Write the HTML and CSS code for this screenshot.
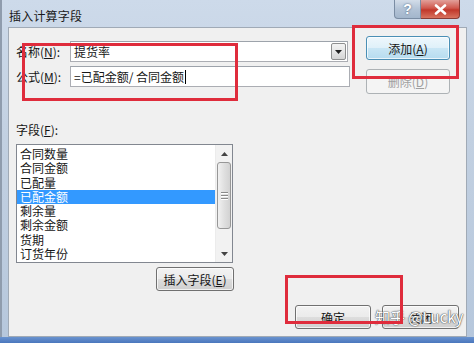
FILE: index.html
```html
<!DOCTYPE html>
<html lang="zh">
<head>
<meta charset="utf-8">
<title>插入计算字段</title>
<link rel="stylesheet" href="styles.css">
</head>
<body>
<div class="window">
  <div class="titlebar">
    <div class="title">插入计算字段</div>
    <div class="caption">
      <div class="cap help">?</div>
      <div class="cap close">
        <svg width="13" height="11" viewBox="0 0 13 11"><path d="M2 1.5 L11 9.5 M11 1.5 L2 9.5" stroke="#fff" stroke-width="2.6" stroke-linecap="round"/></svg>
      </div>
    </div>
  </div>
  <div class="client">
    <div class="top">
      <div class="fields">
        <div class="row row-name">
          <span class="label">名称(<u>N</u>):</span>
          <div class="combo">
            <span class="val">提货率</span>
            <span class="drop"><svg width="7" height="4" viewBox="0 0 7 4"><path d="M0 0 H7 L3.5 4 Z" fill="#222"/></svg></span>
          </div>
        </div>
        <div class="row row-formula">
          <span class="label">公式(<u>M</u>):</span>
          <div class="input"><span class="val">=已配金额/ 合同金额</span><span class="caret"></span></div>
        </div>
      </div>
      <div class="sidebtns">
        <div class="btn default">添加(<u>A</u>)</div>
        <div class="btn disabled">删除(<u>D</u>)</div>
      </div>
    </div>
    <div class="label flabel">字段(<u>F</u>):</div>
    <div class="listbox">
      <div class="items">
        <div class="item">合同数量</div>
        <div class="item">合同金额</div>
        <div class="item">已配量</div>
        <div class="item sel">已配金额</div>
        <div class="item">剩余量</div>
        <div class="item">剩余金额</div>
        <div class="item">货期</div>
        <div class="item">订货年份</div>
      </div>
      <div class="scroll">
        <div class="arrow"><svg width="7" height="4" viewBox="0 0 7 4"><path d="M0 4 H7 L3.5 0 Z" fill="#444"/></svg></div>
        <div class="track">
          <div class="thumb"><span></span><span></span><span></span></div>
        </div>
        <div class="arrow"><svg width="7" height="4" viewBox="0 0 7 4"><path d="M0 0 H7 L3.5 4 Z" fill="#444"/></svg></div>
      </div>
    </div>
    <div class="insert-row"><div class="btn insert">插入字段(<u>E</u>)</div></div>
    <div class="bottom">
      <div class="btn ok">确定</div>
      <div class="btn closebtn">关闭</div>
    </div>
    <div class="watermark">知乎 @Lucky</div>
  </div>
  <div class="mark m1"></div>
  <div class="mark m2"></div>
  <div class="mark m3"></div>
</div>
</body>
</html>
```
FILE: styles.css
```css
* { box-sizing: border-box; }
html, body { margin: 0; padding: 0; }
body {
  width: 474px; height: 343px; overflow: hidden;
  font-family: "Noto Sans CJK SC", "Liberation Sans", sans-serif;
  font-size: 12px; color: #161616;
}
u { text-decoration: underline; text-underline-offset: 1px; }
.window {
  position: relative;
  width: 474px; height: 343px;
  background: linear-gradient(#cddaea, #c2d0e1 40%, #b6c7dc);
  border-left: 2px solid #8f9cad;
  display: flex; flex-direction: column;
}
.titlebar {
  height: 27px; display: flex; justify-content: space-between; align-items: flex-start;
  padding-left: 7px;
}
.title { margin-top: 7px; font-size: 12px; color: #1a1a1a; letter-spacing: 0.2px; }
.caption { display: flex; margin-right: 14px; }
.cap { height: 19px; display: flex; align-items: center; justify-content: center; }
.help {
  width: 27px; border: 1px solid #7a8ca3; border-top: none; border-radius: 0 0 0 4px;
  background: linear-gradient(#d3dde9, #b3c3d6 50%, #a3b6cc);
  color: #fff; font-family: "Liberation Sans", sans-serif; font-weight: bold; font-size: 14px;
  text-shadow: 0 0 2px #3d5673;
}
.close {
  width: 39px; border: 1px solid #8a3b35; border-top: none; border-left: none; border-radius: 0 0 4px 0;
  background: linear-gradient(#e2a09a, #d0584d 45%, #c1372b 55%, #d8735f);
}
.client {
  position: relative;
  flex: 1;
  margin: 0 7px 6px 6px;
  background: #f0f0f0;
  border: 1px solid #a0aab6;
  padding: 0 7px 0 7px;
  display: flex; flex-direction: column;
}
.top { display: flex; justify-content: space-between; }
.fields { display: flex; flex-direction: column; padding-top: 13px; }
.row { display: flex; align-items: center; }
.row-formula { margin-top: 4px; }
.label { width: 54px; white-space: nowrap; }
.combo, .input {
  background: #fff; border: 1px solid #abadb3; border-top-color: #9da3ab;
  height: 21px; display: flex; align-items: center; padding-left: 3px;
}
.combo { width: 278px; justify-content: space-between; padding-right: 1px; }
.input { width: 280px; }
.val { white-space: nowrap; }
.caret { width: 1px; height: 14px; background: #000; margin-left: 1px; }
.drop {
  width: 15px; height: 17px; border: 1px solid #8e8f8f; border-radius: 2px;
  background: linear-gradient(#f3f3f3, #e6e6e6 50%, #d4d4d4);
  display: flex; align-items: center; justify-content: center;
}
.sidebtns { display: flex; flex-direction: column; padding-top: 8px; margin-right: 9px; gap: 9px; }
.btn {
  height: 24px; border: 1px solid #707070; border-radius: 3px;
  background: linear-gradient(#f2f2f2, #ebebeb 50%, #dddddd 51%, #cfcfcf);
  display: flex; align-items: center; justify-content: center; white-space: nowrap;
  box-shadow: inset 0 0 0 1px rgba(255,255,255,0.7);
}
.sidebtns .btn { width: 84px; }
.btn.default {
  border-color: #4a8fb5;
  background: linear-gradient(#eef7fc, #dff0f9 50%, #c9e6f5 51%, #b6dcef);
}
.btn.disabled {
  height: 25px; border-color: #adb2b5; color: #a0a0a0;
  background: #f4f4f4; box-shadow: none;
}
.flabel { margin-top: 27px; }
.listbox {
  margin-top: 6px; width: 217px; height: 119px;
  background: #fff; border: 1px solid #828790;
  display: flex;
}
.items { flex: 1; padding-top: 2px; }
.item { height: 14.3px; line-height: 14.3px; padding-left: 3px; font-size: 12px; }
.item.sel { background: #3399ff; color: #fff; }
.scroll {
  width: 17px; display: flex; flex-direction: column;
  background: #f2f2f2; border-left: 1px solid #ececec;
}
.arrow { height: 17px; display: flex; align-items: center; justify-content: center; }
.track { flex: 1; padding: 0 1px; }
.thumb {
  height: 67px; border: 1px solid #979797; border-radius: 3px;
  background: linear-gradient(90deg, #f1f1f1, #e0e0e0 50%, #d2d2d2);
  display: flex; flex-direction: column; align-items: center; justify-content: center; gap: 2px;
}
.thumb span { width: 7px; height: 1px; background: #8a8a8a; box-shadow: 0 1px 0 #fff; }
.insert-row { width: 218px; display: flex; justify-content: flex-end; margin-top: 4px; }
.btn.insert { width: 78px; }
.bottom { display: flex; justify-content: flex-end; gap: 11px; margin-top: 14px; margin-right: 0; }
.btn.ok { width: 76px; }
.btn.closebtn { width: 77px; }
.watermark {
  position: absolute; left: 366px; top: 278px;
  font-size: 15px; color: #ffffff;
  text-shadow: 0 0 1px #555, 0 0 1px #555, 0 0 2px #888;
  font-family: "Noto Sans CJK SC", "Liberation Sans", sans-serif;
  pointer-events: none;
}
.mark {
  position: absolute; border: 3px solid #df2c3c; pointer-events: none;
}
.m1 { left: 20px; top: 43px; width: 216px; height: 58px; }
.m2 { left: 350px; top: 25px; width: 107px; height: 54px; }
.m3 { left: 283px; top: 275px; width: 118px; height: 49px; }
.window::after {
  content: ""; position: absolute; left: -2px; right: 0; bottom: 0; height: 6px;
  background: linear-gradient(#6a93cf, #4a77bd);
}
```
